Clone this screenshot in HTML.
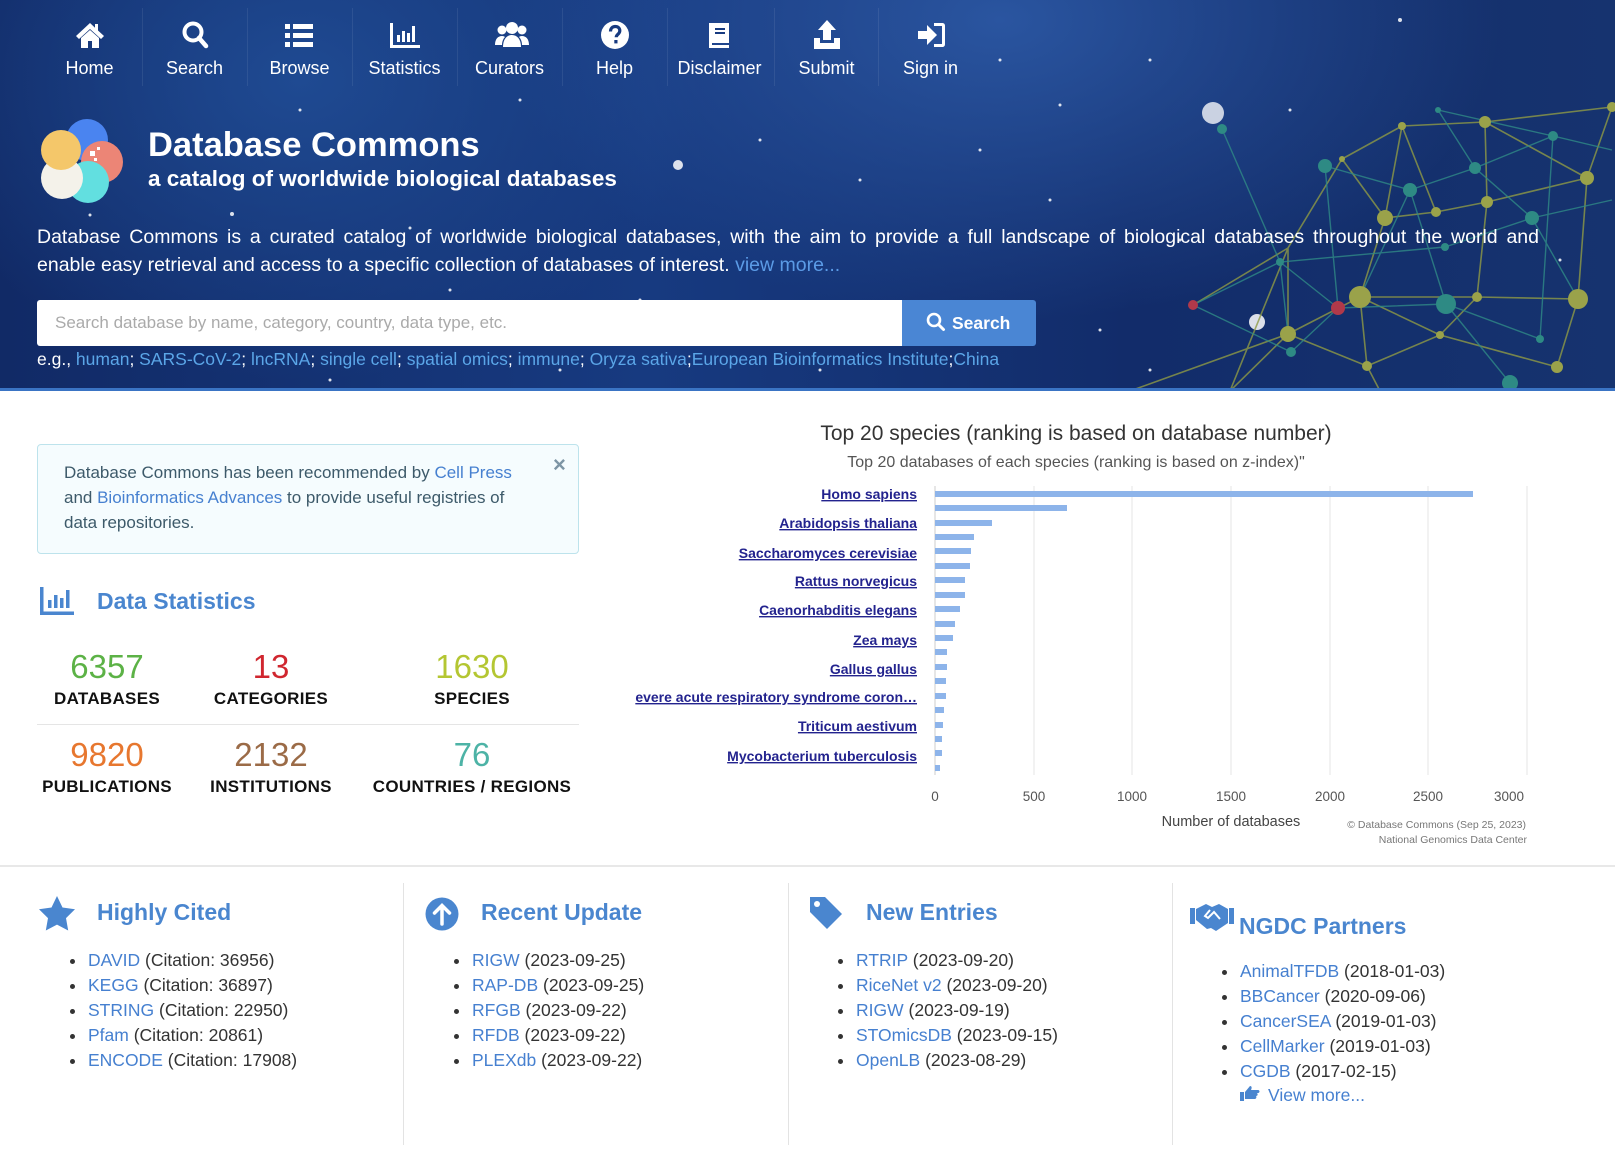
<!DOCTYPE html>
<html><head><meta charset="utf-8">
<style>
*{margin:0;padding:0;box-sizing:border-box}
body{width:1615px;height:1157px;overflow:hidden;background:#fff;font-family:"Liberation Sans",Arial,sans-serif;position:relative}
.hdr{position:absolute;left:0;top:0;width:1615px;height:391px;background:radial-gradient(ellipse 500px 300px at 1000px 20px,#2a55a0 0%,rgba(30,60,130,0) 100%),radial-gradient(ellipse 400px 300px at 300px 80px,#1f4a92 0%,rgba(20,50,110,0) 100%),linear-gradient(90deg,#112a66 0%,#173a80 40%,#122c6a 70%,#16336f 100%);overflow:hidden;border-bottom:3px solid #3a74c4}
.abs{position:absolute}
.nav{position:absolute;top:0;left:0;height:90px}
.ni{position:absolute;top:0;width:105px;height:88px;color:#fff;text-align:center}
.ni svg{position:absolute;left:38px;top:20px}
.ni span{position:absolute;left:0;width:105px;top:58px;font-size:18px}
.sep{position:absolute;top:8px;width:1px;height:78px;background:rgba(255,255,255,0.08)}
a{text-decoration:none}
.lk{color:#4680d0}
ul{list-style:none}
li{position:relative;font-size:17.5px;color:#333;height:25px;line-height:25px}
li:before{content:"";position:absolute;left:-18px;top:11px;width:5px;height:5px;border-radius:50%;background:#333}
.h3{position:absolute;font-size:23px;font-weight:bold;color:#4a86cf}
.num{position:absolute;font-size:33px;text-align:center;width:200px}
.lab{position:absolute;font-size:17px;font-weight:bold;text-align:center;width:220px;color:#111;letter-spacing:0.3px}
.pl{position:absolute;left:37px;width:1502px;font-size:19.5px;line-height:28px;color:#fff;white-space:nowrap}
</style></head><body>
<div class="hdr">
<svg class="abs" style="left:0;top:0" width="1615" height="391">
<g fill="#fff" opacity="0.85">
<circle cx="678" cy="165" r="5"/><circle cx="1213" cy="113" r="11" opacity="0.9"/><circle cx="1257" cy="322" r="8"/>
<circle cx="232" cy="214" r="2"/><circle cx="410" cy="228" r="1.5"/><circle cx="520" cy="100" r="1.5"/><circle cx="760" cy="140" r="1.5"/><circle cx="860" cy="180" r="1.5"/><circle cx="980" cy="150" r="1.5"/><circle cx="1060" cy="105" r="1.5"/><circle cx="940" cy="320" r="1.5"/><circle cx="1100" cy="330" r="1.5"/><circle cx="640" cy="300" r="1.5"/><circle cx="330" cy="380" r="1.5"/><circle cx="1180" cy="240" r="1.5"/><circle cx="1150" cy="370" r="1.5"/><circle cx="1050" cy="200" r="1.5"/><circle cx="450" cy="290" r="1.5"/><circle cx="820" cy="370" r="1.5"/><circle cx="1150" cy="60" r="1.5"/><circle cx="300" cy="110" r="1.5"/><circle cx="1400" cy="20" r="2"/><circle cx="200" cy="310" r="1.5"/><circle cx="90" cy="215" r="1.5"/><circle cx="560" cy="370" r="1.5"/><circle cx="1000" cy="60" r="1.5"/><circle cx="1290" cy="110" r="1.5"/><circle cx="1560" cy="260" r="1.5"/>
</g>
<g stroke="#8f9a45" stroke-width="1.6" fill="none" opacity="0.8">
<path d="M1342 159L1402 126L1485 122L1612 107M1402 126L1385 218L1342 159L1288 248L1230 391M1402 126L1436 212L1487 202L1587 178L1612 107M1485 122L1487 202L1477 297L1440 335L1367 366M1385 218L1436 212M1385 218L1360 297L1367 366M1360 297L1477 297L1578 299M1288 334L1360 297L1440 335L1557 367M1288 248L1288 334L1230 391M1587 178L1578 299L1557 367M1485 122L1587 178M1288 334L1367 366L1380 391M1130 391L1288 334M1193 305L1288 248"/>
</g>
<g stroke="#2f8a86" stroke-width="1.4" fill="none" opacity="0.8">
<path d="M1222 129L1280 262L1288 334M1325 166L1338 308L1291 352M1325 166L1410 190L1475 168L1553 136L1612 150M1438 110L1475 168L1532 218L1578 299M1438 110L1553 136L1540 339M1193 305L1291 352M1446 304L1510 383M1338 308L1446 304L1540 339M1280 262L1338 308M1410 190L1446 304M1445 247L1532 218L1612 200M1193 305L1280 262L1445 247M1360 297L1410 190"/>
</g>
<g>
<circle cx="1222" cy="129" r="5" fill="#2e8a84"/><circle cx="1325" cy="166" r="7" fill="#2e8a84"/><circle cx="1342" cy="159" r="3" fill="#9aa24a"/><circle cx="1402" cy="126" r="4" fill="#9aa24a"/><circle cx="1438" cy="110" r="3" fill="#2e8a84"/><circle cx="1485" cy="122" r="6" fill="#9aa24a"/><circle cx="1553" cy="136" r="5" fill="#2e8a84"/><circle cx="1612" cy="107" r="5" fill="#9aa24a"/><circle cx="1410" cy="190" r="7" fill="#2e8a84"/><circle cx="1385" cy="218" r="8" fill="#9aa24a"/><circle cx="1436" cy="212" r="5" fill="#9aa24a"/><circle cx="1475" cy="168" r="6" fill="#2e8a84"/><circle cx="1487" cy="202" r="6" fill="#9aa24a"/><circle cx="1532" cy="218" r="7" fill="#2e8a84"/><circle cx="1587" cy="178" r="7" fill="#9aa24a"/><circle cx="1280" cy="262" r="4" fill="#2e8a84"/><circle cx="1193" cy="305" r="5" fill="#b0394a"/><circle cx="1338" cy="308" r="7" fill="#b0394a"/><circle cx="1360" cy="297" r="11" fill="#9aa24a"/><circle cx="1446" cy="304" r="10" fill="#2e8a84"/><circle cx="1477" cy="297" r="5" fill="#9aa24a"/><circle cx="1578" cy="299" r="10" fill="#9aa24a"/><circle cx="1288" cy="334" r="8" fill="#9aa24a"/><circle cx="1291" cy="352" r="5" fill="#2e8a84"/><circle cx="1367" cy="366" r="5" fill="#9aa24a"/><circle cx="1440" cy="335" r="4" fill="#9aa24a"/><circle cx="1540" cy="339" r="4" fill="#2e8a84"/><circle cx="1557" cy="367" r="6" fill="#9aa24a"/><circle cx="1510" cy="383" r="8" fill="#2e8a84"/><circle cx="1445" cy="247" r="4" fill="#2e8a84"/>
</g>
</svg>
<div class="nav">
<div class="sep" style="left:142px"></div><div class="sep" style="left:247px"></div><div class="sep" style="left:352px"></div><div class="sep" style="left:457px"></div><div class="sep" style="left:562px"></div><div class="sep" style="left:667px"></div><div class="sep" style="left:774px"></div><div class="sep" style="left:878px"></div>
<div class="ni" style="left:37px"><svg width="30" height="30" viewBox="0 0 30 30"><path d="M15 3L1 16l3 3 11-10 11 10 3-3-6-5.5V4h-3v3.7z M6 18v10h7v-7h4v7h7V18L15 10z" fill="#fff"/></svg><span>Home</span></div>
<div class="ni" style="left:142px"><svg width="30" height="30" viewBox="0 0 30 30"><circle cx="13" cy="12" r="8.5" stroke="#fff" stroke-width="4" fill="none"/><path d="M19 18l7 8" stroke="#fff" stroke-width="4.5" stroke-linecap="round"/></svg><span>Search</span></div>
<div class="ni" style="left:247px"><svg width="30" height="30" viewBox="0 0 30 30" fill="#fff"><rect x="0" y="4" width="5" height="5"/><rect x="8" y="4" width="20" height="5"/><rect x="0" y="13" width="5" height="5"/><rect x="8" y="13" width="20" height="5"/><rect x="0" y="22" width="5" height="5"/><rect x="8" y="22" width="20" height="5"/></svg><span>Browse</span></div>
<div class="ni" style="left:352px"><svg width="30" height="30" viewBox="0 0 30 30" fill="#fff"><rect x="0" y="3" width="3" height="25"/><rect x="0" y="25" width="30" height="3"/><rect x="7" y="15" width="3" height="7"/><rect x="12" y="11" width="3" height="11"/><rect x="17" y="13" width="3" height="9"/><rect x="22" y="6" width="3" height="16"/></svg><span>Statistics</span></div>
<div class="ni" style="left:457px"><svg width="34" height="30" viewBox="0 0 34 30" fill="#fff"><circle cx="17" cy="8" r="6"/><circle cx="7" cy="10" r="4.5"/><circle cx="27" cy="10" r="4.5"/><path d="M8 27c0-8 4-12 9-12s9 4 9 12z"/><path d="M0 25c0-6 3-9 7-9 2 0 3 1 3 1-2 2-3 5-3 8z"/><path d="M34 25c0-6-3-9-7-9-2 0-3 1-3 1 2 2 3 5 3 8z"/></svg><span>Curators</span></div>
<div class="ni" style="left:562px"><svg width="30" height="30" viewBox="0 0 30 30"><circle cx="15" cy="15" r="14" fill="#fff"/><path d="M10.5 11.5c0-3 2-5 4.7-5 2.8 0 4.6 1.8 4.6 4.2 0 3.5-3.6 3.6-3.6 6.5" stroke="#173a80" stroke-width="3.2" fill="none"/><rect x="14.3" y="20" width="3.2" height="3.4" fill="#173a80"/></svg><span>Help</span></div>
<div class="ni" style="left:667px"><svg width="30" height="30" viewBox="0 0 30 30" fill="#fff"><path d="M4 3h20v20H7v2h17v3H4z"/><rect x="10" y="8" width="10" height="2" fill="#173a80"/><rect x="10" y="12" width="10" height="2" fill="#173a80"/></svg><span>Disclaimer</span></div>
<div class="ni" style="left:774px"><svg width="30" height="32" viewBox="0 0 30 32" fill="#fff"><path d="M15 0l9 10h-5v10h-8V10H6z"/><path d="M2 18h6v5h14v-5h6v11H2z"/></svg><span>Submit</span></div>
<div class="ni" style="left:878px"><svg width="30" height="30" viewBox="0 0 30 30" fill="#fff"><path d="M2 11h9V5l10 10-10 10v-6H2z"/><path d="M18 3h8c2 0 3 1 3 3v18c0 2-1 3-3 3h-8v-3h8V6h-8z"/></svg><span>Sign in</span></div>
</div>
<svg class="abs" style="left:36px;top:118px" width="92" height="90" viewBox="36 118 92 90">
<circle cx="87" cy="140" r="21" fill="#4a84f0"/><circle cx="102" cy="162" r="21" fill="#ec8576"/><circle cx="88" cy="182" r="21" fill="#62dfe0"/><circle cx="62" cy="178" r="21" fill="#f4f2ea"/><circle cx="61" cy="150" r="20" fill="#f4c76a"/>
<rect x="90" y="151" width="5" height="5" fill="#fff"/><rect x="97" y="147" width="3" height="3" fill="#fff"/><rect x="94" y="158" width="3" height="3" fill="#fff"/>
</svg>
<div class="abs" style="left:148px;top:126px;font-size:34.5px;font-weight:bold;color:#fff">Database Commons</div>
<div class="abs" style="left:148px;top:166px;font-size:22.5px;font-weight:bold;color:#fff">a catalog of worldwide biological databases</div>
<div class="pl" style="top:223px;text-align:justify;text-align-last:justify">Database Commons is a curated catalog of worldwide biological databases, with the aim to provide a full landscape of biological databases throughout the world and</div>
<div class="pl" style="top:251px">enable easy retrieval and access to a specific collection of databases of interest. <span style="color:#5b9be6">view more...</span></div>
<div class="abs" style="left:37px;top:300px;width:866px;height:46px;background:#fff;border-radius:3px 0 0 3px;font-size:17px;color:#aaa;padding:13px 18px">Search database by name, category, country, data type, etc.</div>
<div class="abs" style="left:902px;top:300px;width:134px;height:46px;background:#4a86d4;border-radius:0 3px 3px 0;color:#fff;font-size:17.5px;font-weight:bold;padding:12px 0 0 24px"><svg width="20" height="20" viewBox="0 0 20 20" style="vertical-align:-3px;margin-right:6px"><circle cx="8" cy="8" r="6" stroke="#fff" stroke-width="2.6" fill="none"/><path d="M12.5 12.5l5 5" stroke="#fff" stroke-width="3" stroke-linecap="round"/></svg>Search</div>
<div class="abs" style="left:37px;top:349px;font-size:17.5px;color:#fff">e.g., <span style="color:#5ba6e8">human</span>; <span style="color:#5ba6e8">SARS-CoV-2</span>; <span style="color:#5ba6e8">lncRNA</span>; <span style="color:#5ba6e8">single cell</span>; <span style="color:#5ba6e8">spatial omics</span>; <span style="color:#5ba6e8">immune</span>; <span style="color:#5ba6e8">Oryza sativa</span>;<span style="color:#5ba6e8">European Bioinformatics Institute</span>;<span style="color:#5ba6e8">China</span></div>
</div>

<div class="abs" style="left:37px;top:444px;width:542px;height:110px;border:1px solid #bde3ec;background:#f5fcfe;border-radius:4px;padding:15px 40px 0 26px;font-size:17px;line-height:25px;color:#3d5a6a">Database Commons has been recommended by <span class="lk">Cell Press</span> and <span class="lk">Bioinformatics Advances</span> to provide useful registries of data repositories.</div>
<div class="abs" style="left:553px;top:452px;font-size:22px;font-weight:bold;color:#7d95a5">×</div>

<svg class="abs" style="left:40px;top:587px" width="34" height="28" viewBox="0 0 34 28" fill="#4a86cf"><rect x="0" y="0" width="3.5" height="28"/><rect x="0" y="24.5" width="34" height="3.5"/><rect x="8" y="13" width="3.5" height="8"/><rect x="14" y="8" width="3.5" height="13"/><rect x="20" y="11" width="3.5" height="10"/><rect x="26" y="3" width="3.5" height="18"/></svg>
<div class="h3" style="left:97px;top:588px">Data Statistics</div>

<div class="num" style="left:7px;top:648px;color:#5cb246">6357</div>
<div class="lab" style="left:-3px;top:689px">DATABASES</div>
<div class="num" style="left:171px;top:648px;color:#d0262f">13</div>
<div class="lab" style="left:161px;top:689px">CATEGORIES</div>
<div class="num" style="left:372px;top:648px;color:#b4c632">1630</div>
<div class="lab" style="left:362px;top:689px">SPECIES</div>
<div class="abs" style="left:37px;top:724px;width:542px;height:1px;background:#e5e5e5"></div>
<div class="num" style="left:7px;top:736px;color:#e7772f">9820</div>
<div class="lab" style="left:-3px;top:777px">PUBLICATIONS</div>
<div class="num" style="left:171px;top:736px;color:#9b6b47">2132</div>
<div class="lab" style="left:161px;top:777px">INSTITUTIONS</div>
<div class="num" style="left:372px;top:736px;color:#4db3a6">76</div>
<div class="lab" style="left:352px;top:777px;width:240px">COUNTRIES / REGIONS</div>

<svg class="abs" style="left:600px;top:400px" width="1015" height="460" viewBox="600 400 1015 460" font-family="Liberation Sans, Arial, sans-serif">
<text x="1076" y="440" text-anchor="middle" font-size="21" fill="#333">Top 20 species (ranking is based on database number)</text>
<text x="1076" y="467" text-anchor="middle" font-size="16" fill="#555">Top 20 databases of each species (ranking is based on z-index)"</text>
<g stroke="#e6e6e6" stroke-width="1">
<line x1="1034" y1="486" x2="1034" y2="775"/><line x1="1132" y1="486" x2="1132" y2="775"/><line x1="1231" y1="486" x2="1231" y2="775"/><line x1="1330" y1="486" x2="1330" y2="775"/><line x1="1428" y1="486" x2="1428" y2="775"/><line x1="1527" y1="486" x2="1527" y2="775"/>
</g>
<line x1="935" y1="486" x2="935" y2="775" stroke="#ccc"/>
<g fill="#8db4ea">
<rect x="935" y="491" width="538" height="6"/><rect x="935" y="505" width="132" height="6"/><rect x="935" y="520" width="57" height="6"/><rect x="935" y="534" width="39" height="6"/><rect x="935" y="548" width="36" height="6"/><rect x="935" y="563" width="35" height="6"/><rect x="935" y="577" width="30" height="6"/><rect x="935" y="592" width="30" height="6"/><rect x="935" y="606" width="25" height="6"/><rect x="935" y="621" width="20" height="6"/><rect x="935" y="635" width="18" height="6"/><rect x="935" y="649" width="12" height="6"/><rect x="935" y="664" width="12" height="6"/><rect x="935" y="678" width="11" height="6"/><rect x="935" y="693" width="11" height="6"/><rect x="935" y="707" width="9" height="6"/><rect x="935" y="722" width="8" height="6"/><rect x="935" y="736" width="7" height="6"/><rect x="935" y="750" width="7" height="6"/><rect x="935" y="765" width="5" height="6"/>
</g>
<g font-size="14" font-weight="bold" fill="#23238e" text-anchor="end" text-decoration="underline">
<text x="917" y="499">Homo sapiens</text><text x="917" y="528">Arabidopsis thaliana</text><text x="917" y="558">Saccharomyces cerevisiae</text><text x="917" y="586">Rattus norvegicus</text><text x="917" y="615">Caenorhabditis elegans</text><text x="917" y="645">Zea mays</text><text x="917" y="674">Gallus gallus</text><text x="917" y="702">evere acute respiratory syndrome coron…</text><text x="917" y="731">Triticum aestivum</text><text x="917" y="761">Mycobacterium tuberculosis</text>
</g>
<g font-size="13.5" fill="#555" text-anchor="middle">
<text x="935" y="801">0</text><text x="1034" y="801">500</text><text x="1132" y="801">1000</text><text x="1231" y="801">1500</text><text x="1330" y="801">2000</text><text x="1428" y="801">2500</text><text x="1509" y="801">3000</text>
</g>
<text x="1231" y="826" text-anchor="middle" font-size="14.5" fill="#444">Number of databases</text>
<text x="1526" y="828" text-anchor="end" font-size="10.5" fill="#777">© Database Commons (Sep 25, 2023)</text>
<text x="1527" y="843" text-anchor="end" font-size="10.5" fill="#777">National Genomics Data Center</text>
</svg>

<div class="abs" style="left:0;top:865px;width:1615px;height:2px;background:#e8e8e8"></div>
<div class="abs" style="left:403px;top:883px;width:1px;height:262px;background:#e3e3e3"></div>
<div class="abs" style="left:788px;top:883px;width:1px;height:262px;background:#e3e3e3"></div>
<div class="abs" style="left:1172px;top:883px;width:1px;height:262px;background:#e3e3e3"></div>

<svg class="abs" style="left:38px;top:895px" width="38" height="36" viewBox="0 0 38 36"><path d="M19 1l5.5 11.5 12.5 1.8-9 8.8 2.2 12.4L19 29.6 7.8 35.5 10 23.1 1 14.3l12.5-1.8z" fill="#4a86cf"/></svg>
<div class="h3" style="left:97px;top:899px">Highly Cited</div>
<ul class="abs" style="left:88px;top:948px">
<li><span class="lk">DAVID</span> (Citation: 36956)</li><li><span class="lk">KEGG</span> (Citation: 36897)</li><li><span class="lk">STRING</span> (Citation: 22950)</li><li><span class="lk">Pfam</span> (Citation: 20861)</li><li><span class="lk">ENCODE</span> (Citation: 17908)</li></ul>

<svg class="abs" style="left:425px;top:897px" width="34" height="34" viewBox="0 0 34 34"><circle cx="17" cy="17" r="16.5" fill="#4a86cf"/><path d="M17 27V9M9.5 16L17 8.5 24.5 16" stroke="#fff" stroke-width="3.5" fill="none" stroke-linecap="round"/></svg>
<div class="h3" style="left:481px;top:899px">Recent Update</div>
<ul class="abs" style="left:472px;top:948px">
<li><span class="lk">RIGW</span> (2023-09-25)</li><li><span class="lk">RAP-DB</span> (2023-09-25)</li><li><span class="lk">RFGB</span> (2023-09-22)</li><li><span class="lk">RFDB</span> (2023-09-22)</li><li><span class="lk">PLEXdb</span> (2023-09-22)</li></ul>

<svg class="abs" style="left:808px;top:895px" width="36" height="36" viewBox="0 0 36 36"><path d="M2 2h15l17 17-15 15L2 17z" fill="#4a86cf"/><circle cx="9" cy="9" r="3" fill="#fff"/></svg>
<div class="h3" style="left:866px;top:899px">New Entries</div>
<ul class="abs" style="left:856px;top:948px">
<li><span class="lk">RTRIP</span> (2023-09-20)</li><li><span class="lk">RiceNet v2</span> (2023-09-20)</li><li><span class="lk">RIGW</span> (2023-09-19)</li><li><span class="lk">STOmicsDB</span> (2023-09-15)</li><li><span class="lk">OpenLB</span> (2023-08-29)</li></ul>

<svg class="abs" style="left:1190px;top:900px" width="44" height="32" viewBox="0 0 44 32" fill="#4a86cf"><rect x="0" y="8" width="5" height="16"/><rect x="39" y="8" width="5" height="16"/><path d="M6 9l10-5 6 3 7-3 9 5v14l-12 8-5-3-4 1-11-9z"/><path d="M20 10l-5 6 3 2 6-6 6 7" stroke="#fff" stroke-width="2" fill="none"/></svg>
<div class="h3" style="left:1239px;top:913px">NGDC Partners</div>
<ul class="abs" style="left:1240px;top:959px">
<li><span class="lk">AnimalTFDB</span> (2018-01-03)</li><li><span class="lk">BBCancer</span> (2020-09-06)</li><li><span class="lk">CancerSEA</span> (2019-01-03)</li><li><span class="lk">CellMarker</span> (2019-01-03)</li><li><span class="lk">CGDB</span> (2017-02-15)</li></ul>
<div class="abs" style="left:1240px;top:1085px;font-size:17.5px"><svg width="20" height="16" viewBox="0 0 20 16" style="vertical-align:-1px;margin-right:8px"><path d="M0 6h4v9H0zM5 6l5-6c2 0 2 2 1 4h7c2 0 2 3 0 3h-1c1 1 1 3-1 3 1 1 0 3-1 3H5z" fill="#4a86cf"/></svg><span style="color:#4680d0">View more...</span></div>
</body></html>
